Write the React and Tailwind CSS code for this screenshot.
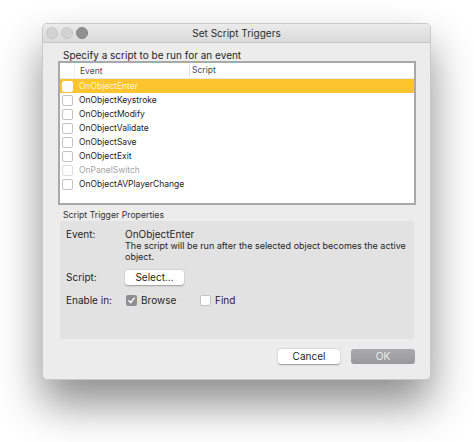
import React from "react";

const EVENTS = [
  { name: "OnObjectEnter", selected: true },
  { name: "OnObjectKeystroke" },
  { name: "OnObjectModify" },
  { name: "OnObjectValidate" },
  { name: "OnObjectSave" },
  { name: "OnObjectExit" },
  { name: "OnPanelSwitch", disabled: true },
  { name: "OnObjectAVPlayerChange" },
];

const Check = ({ checked, selected, disabled }) => {
  if (checked) {
    return (
      <span className="w-[11px] h-[11px] shrink-0 rounded-[2px] bg-[#8f8f93] flex items-center justify-center">
        <svg width="9" height="9" viewBox="0 0 10 10">
          <path d="M2 5.2 L4.2 7.4 L8 2.4" fill="none" stroke="#fff" strokeWidth="1.6" strokeLinecap="round" strokeLinejoin="round" />
        </svg>
      </span>
    );
  }
  return (
    <span
      className={
        "w-[11px] h-[11px] shrink-0 rounded-[2px] bg-white border " +
        (selected ? "border-white" : disabled ? "border-[#dcdcdc]" : "border-[#c3c3c3]")
      }
    />
  );
};

const Row = ({ ev }) => (
  <div className={"h-[14px] flex items-center " + (ev.selected ? "bg-[#fcc52f]" : "")}>
    <div className="pl-[2px] flex">
      <Check selected={ev.selected} disabled={ev.disabled} />
    </div>
    <span
      className={
        "pl-[6px] text-[8.5px] leading-none " +
        (ev.selected ? "text-[#fff4d2]" : ev.disabled ? "text-[#a5a5a5]" : "text-[#1d1d1d]")
      }
    >
      {ev.name}
    </span>
  </div>
);

export default function App() {
  return (
    <div
      className="w-[474px] h-[442px] bg-white pt-[23px] pl-[42px]"
      style={{ fontFamily: "Inter, 'Liberation Sans', sans-serif" }}
    >
      <div className="w-[389px] h-[357px] bg-[#ececec] rounded-[5px] border border-[#c9c9c9] shadow-[0_24px_44px_rgba(0,0,0,0.45)] flex flex-col overflow-hidden">
        {/* title bar */}
        <div className="h-[19px] shrink-0 bg-gradient-to-b from-[#ebebeb] to-[#dadada] border-b border-[#c6c6c6] flex items-center">
          <div className="flex gap-[3px] pl-[3px]">
            <span className="w-[12px] h-[12px] rounded-full bg-[#d3d3d3] border border-[#c6c6c6]" />
            <span className="w-[12px] h-[12px] rounded-full bg-[#d3d3d3] border border-[#c6c6c6]" />
            <span className="w-[12px] h-[12px] rounded-full bg-[#909090] border border-[#858585]" />
          </div>
          <div className="flex-1 text-center text-[10px] text-[#2c2c2c] pr-[45px]">Set Script Triggers</div>
        </div>

        <div className="flex flex-col pl-[15px] pr-[14px] pt-[6px]">
          <div className="text-[10px] text-[#1f1f1f] pl-[5px] leading-[12px]">Specify a script to be run for an event</div>
          <div className="h-[144px] bg-white border-2 border-[#a9a9a9] flex flex-col">
            <div className="h-[16px] shrink-0 flex items-center text-[8.5px] text-[#4a4a4a] border-b border-[#e6e6e6]">
              <div className="w-[15px] h-full border-r border-[#eeeeee]" />
              <div className="w-[115px] h-[12px] pl-[5px] border-r border-[#dcdcdc] leading-[12px]">Event</div>
              <div className="pl-[2px]">Script</div>
            </div>
            {EVENTS.map((ev) => (
              <Row key={ev.name} ev={ev} />
            ))}
          </div>

          <div className="text-[8.7px] text-[#333] pl-[5px] mt-[4px] leading-[12px]">Script Trigger Properties</div>
          <div className="mx-[2px] h-[118px] bg-[#e2e2e2] rounded-[3px] px-[6px] pt-[7px] flex flex-col text-[#1f1f1f]">
            <div className="flex">
              <div className="w-[59px] shrink-0 text-[10px] leading-[12px]">Event:</div>
              <div className="flex flex-col">
                <div className="text-[10px] leading-[12px]">OnObjectEnter</div>
                <div className="text-[9px] leading-[11px] w-[285px]">
                  The script will be run after the selected object becomes the active object.
                </div>
              </div>
            </div>
            <div className="flex items-center mt-[8px]">
              <div className="w-[59px] shrink-0 text-[10px]">Script:</div>
              <div className="w-[59px] h-[15px] bg-white rounded-[3px] shadow-[0_0.5px_1.5px_rgba(0,0,0,0.3)] flex items-center justify-center text-[10px]">
                Select...
              </div>
            </div>
            <div className="flex items-center mt-[8px]">
              <div className="w-[60px] shrink-0 text-[10px]">Enable in:</div>
              <Check checked />
              <span className="ml-[4px] text-[10px] w-[59px]">Browse</span>
              <Check />
              <span className="ml-[4px] text-[10px]">Find</span>
            </div>
          </div>

          <div className="flex justify-end gap-[11px] mt-[10px] pr-[1px]">
            <div className="w-[62px] h-[15px] bg-white rounded-[3px] shadow-[0_0.5px_1.5px_rgba(0,0,0,0.35)] flex items-center justify-center text-[10px] text-[#1f1f1f]">
              Cancel
            </div>
            <div className="w-[64px] h-[15px] bg-gradient-to-b from-[#a9a9ae] to-[#98989d] rounded-[3px] flex items-center justify-center text-[10px] text-[#eeeeee]">
              OK
            </div>
          </div>
        </div>
      </div>
    </div>
  );
}
